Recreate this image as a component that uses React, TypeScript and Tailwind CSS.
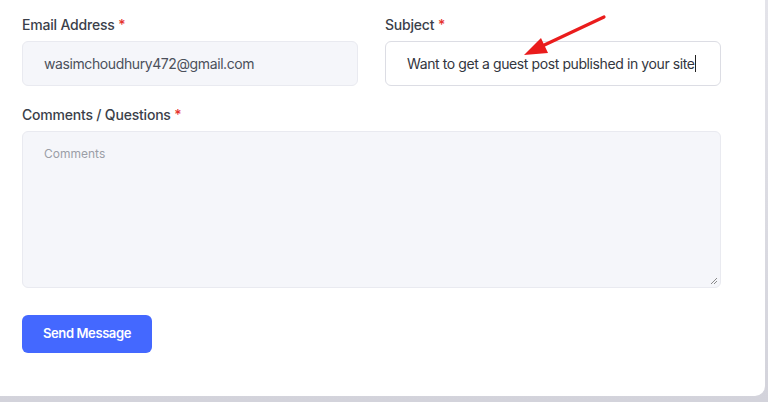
import React from "react";

const font = { fontFamily: "Inter, 'Noto Sans', sans-serif" };

const Label = ({ text }: { text: string }) => (
  <label className="block text-[14px] font-medium text-[#3b3f4a] leading-5 mb-[6px] tracking-[-0.2px]">
    {text} <span className="text-[#e5322d]">*</span>
  </label>
);

const App = () => {
  return (
    <div className="w-[768px] h-[402px] bg-gradient-to-b from-[#e4e4ea] to-[#d3d3db] overflow-hidden" style={font}>
      <div className="relative w-[765px] h-[396px] bg-white rounded-br-[10px] pl-[22px] pr-[44px] pt-[15px]">
        <div className="grid grid-cols-2 gap-x-[27px]">
          <div>
            <Label text="Email Address" />
            <div className="h-[45px] rounded-[6px] bg-[#f5f6fa] border border-[#e9eaf0] flex items-center pl-[21px] text-[14px] tracking-[-0.4px] text-[#4b505b]">
              wasimchoudhury472@gmail.com
            </div>
          </div>
          <div>
            <Label text="Subject" />
            <div className="h-[45px] rounded-[6px] bg-white border border-[#dcdde4] flex items-center pl-[21px] text-[14px] tracking-[-0.4px] text-[#333640]">
              Want to get a guest post published in your site
              <span className="inline-block w-px h-[17px] bg-[#222]"></span>
            </div>
          </div>
        </div>

        <div className="mt-[19px]">
          <Label text="Comments / Questions" />
          <div className="relative h-[157px] rounded-[6px] bg-[#f5f6fa] border border-[#e9eaf0] pl-[21px] pt-[13px] text-[12px] text-[#9b9ea7]">
            Comments
            <svg className="absolute right-[2px] bottom-[2px]" width="8" height="8" viewBox="0 0 8 8">
              <path d="M7 1 L1 7 M7 4 L4 7" stroke="#8a8a8a" strokeWidth="1" />
            </svg>
          </div>
        </div>

        <button className="mt-[27px] w-[130px] h-[38px] rounded-[6px] bg-[#4468ff] text-white text-[13px] font-semibold tracking-[-0.4px]">
          Send Message
        </button>

        <svg className="absolute left-[520px] top-[12px]" width="92" height="48" viewBox="0 0 92 48">
          <line x1="84" y1="5" x2="18" y2="36" stroke="#ea1c1c" strokeWidth="3.2" strokeLinecap="round" />
          <polygon points="4,43 21,26 28,41" fill="#ea1c1c" />
        </svg>
      </div>
    </div>
  );
};

export default App;
